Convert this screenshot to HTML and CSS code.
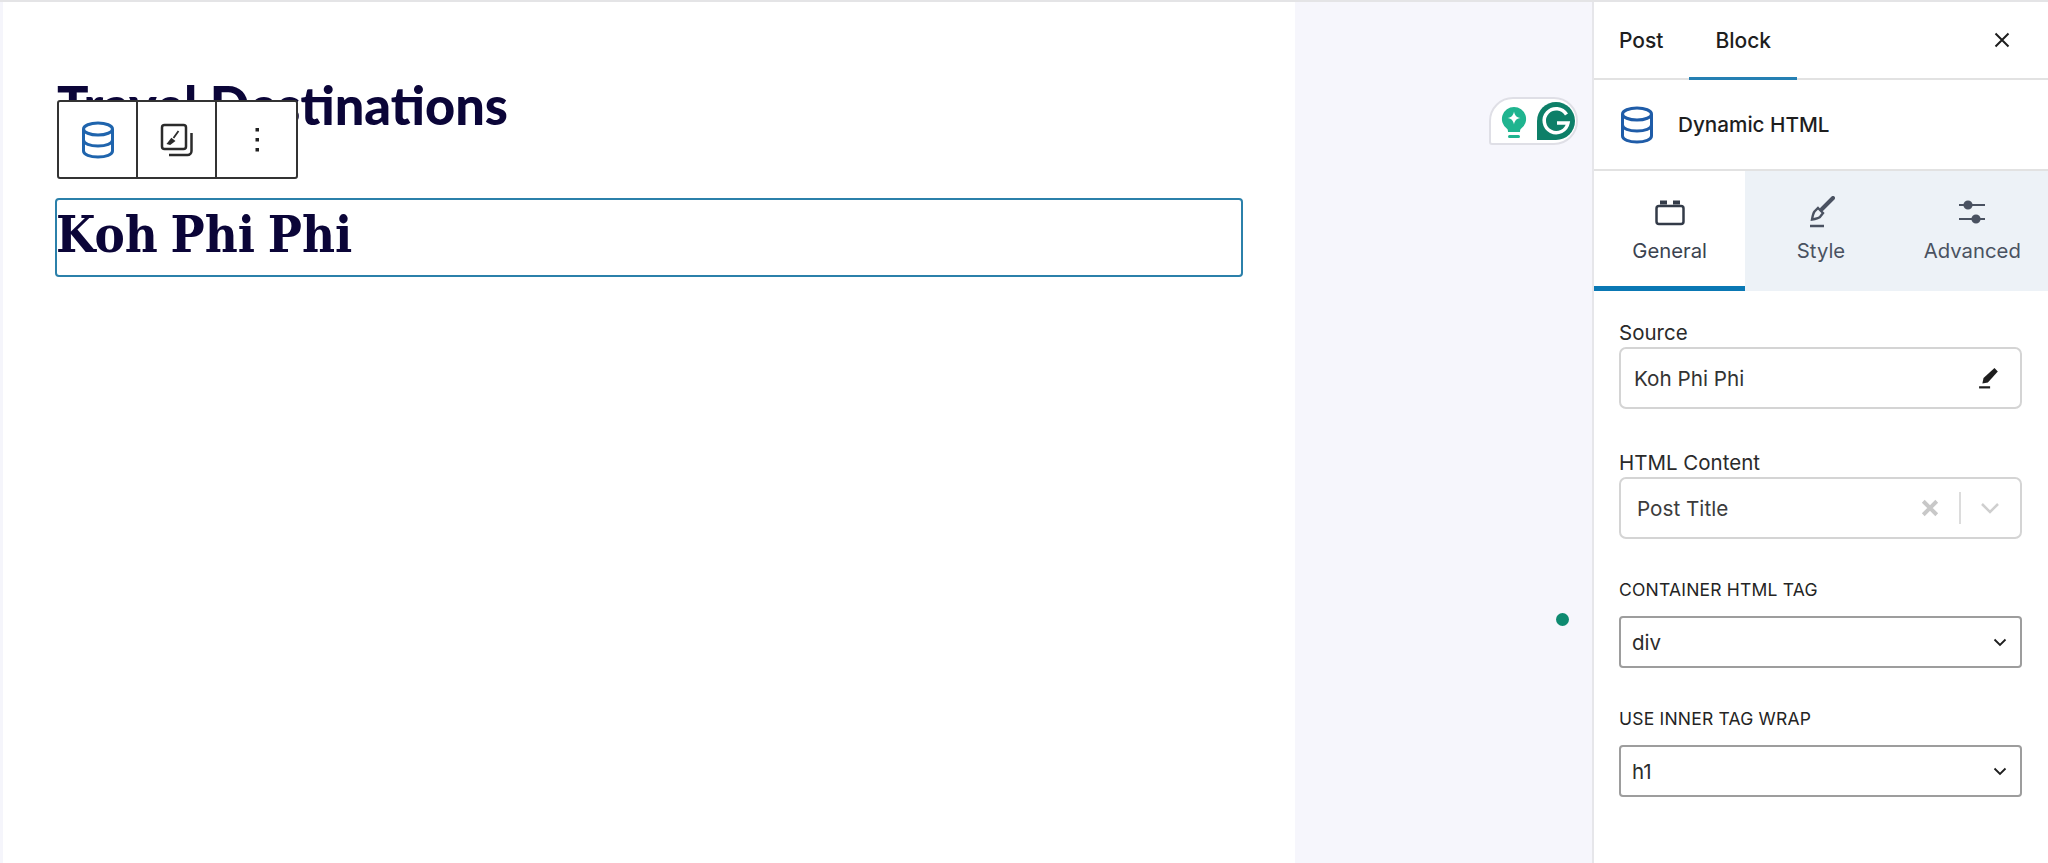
FILE: index.html
```html
<!DOCTYPE html>
<html lang="en">
<head>
    <meta charset="UTF-8">
    <meta name="viewport" content="width=device-width, initial-scale=1.0">
    <title>Edit Post</title>
    <link rel="stylesheet" href="styles.css">
</head>
<body>
    <div class="app">
        <main class="canvas">
            <h2 class="page-title">Travel Destinations</h2>
            <div class="block-selected">
                <h1 class="block-title">Koh Phi Phi</h1>
            </div>

            <!-- Floating block toolbar -->
            <div class="toolbar">
                <div class="toolbar-cell">
                    <svg width="34" height="38" viewBox="0 0 34 38" fill="none" stroke="#1f64ad" stroke-width="3">
                        <ellipse cx="17" cy="8" rx="14.5" ry="6"/>
                        <path d="M2.5 8v22c0 3.5 6.500 6 14.500 6s14.500-2.500 14.500-6V8"/>
                        <path d="M2.500 19c0 3.500 6.500 6 14.500 6s14.500-2.500 14.500-6"/>
                    </svg>
                </div>
                <div class="toolbar-cell">
                    <svg width="34" height="34" viewBox="0 0 34 34" fill="none" stroke="#2b2b2b" stroke-width="2.500">
                        <rect x="2" y="2" width="24" height="24" rx="2.500"/>
                        <path d="M31.500 10v18a4 4 0 0 1-4 4H9"/>
                        <path d="M8 20.500l3.500-4.500 2.500 2-4 3zM13.500 15l5-7" stroke-width="1.800" fill="#2b2b2b"/>
                    </svg>
                </div>
                <div class="toolbar-cell">
                    <svg width="6" height="26" viewBox="0 0 6 26" fill="#222">
                        <rect x="1.500" y="1" width="3.500" height="3.500"/>
                        <rect x="1.500" y="11" width="3.500" height="3.500"/>
                        <rect x="1.500" y="21" width="3.500" height="3.500"/>
                    </svg>
                </div>
            </div>
        </main>

        <div class="gutter">
            <div class="grammarly">
                <svg class="bulb-icon" width="26" height="34" viewBox="0 0 26 34">
                    <path d="M13 1a12 12 0 0 1 7 21.800c-.8.700-1 1.700-1 3.200H7c0-1.500-.2-2.500-1-3.200A12 12 0 0 1 13 1z" fill="#1fb48f"/>
                    <path d="M13 5.500c.8 4 2.300 5.700 6.500 6.500-4.200.8-5.700 2.500-6.500 6.500-.8-4-2.300-5.700-6.500-6.500 4.200-.8 5.700-2.500 6.500-6.500z" fill="#fff"/>
                    <rect x="7" y="29" width="12" height="3" rx="1.500" fill="#1fb48f"/>
                </svg>
                <div class="grammarly-g">
                    <svg width="36" height="36" viewBox="0 0 36 36" fill="none" stroke="#fff" stroke-width="3.500">
                        <path d="M28.500 11.500A12 12 0 1 0 30 20H19"/>
                    </svg>
                </div>
            </div>
            <span class="status-dot"></span>
        </div>

        <aside class="sidebar">
            <div class="sidebar-header">
                <div class="sidebar-tab">Post</div>
                <div class="sidebar-tab active">Block</div>
                <svg class="close-icon" width="16" height="16" viewBox="0 0 16 16" fill="none" stroke="#1e1e1e" stroke-width="2">
                    <path d="M1.500 1.500l13 13M14.500 1.500l-13 13"/>
                </svg>
            </div>

            <div class="block-info">
                <svg width="34" height="38" viewBox="0 0 34 38" fill="none" stroke="#1f5ca8" stroke-width="3">
                    <ellipse cx="17" cy="8" rx="14.500" ry="6"/>
                    <path d="M2.500 8v22c0 3.500 6.500 6 14.500 6s14.500-2.500 14.500-6V8"/>
                    <path d="M2.500 19c0 3.500 6.500 6 14.500 6s14.500-2.500 14.500-6"/>
                </svg>
                <span>Dynamic HTML</span>
            </div>

            <div class="panel-tabs">
                <div class="panel-tab active">
                    <svg width="30" height="26" viewBox="0 0 30 26" fill="none" stroke="#333b48" stroke-width="2.500">
                        <rect x="1.500" y="6" width="27" height="18" rx="2.500"/>
                        <path d="M5 2.500h7M18 2.500h7" stroke-width="4"/>
                    </svg>
                    <span>General</span>
                </div>
                <div class="panel-tab">
                    <svg class="pen-icon" width="28" height="32" viewBox="0 0 28 32" fill="none" stroke="#4a5261" stroke-width="2.200">
                        <path d="M26 2L15 13" stroke-width="4" stroke-linecap="round"/>
                        <path d="M11 12l5 5-3 4c-2 1.500-5 2-8 2.500.5-3 1-6 2.500-8z" stroke-width="2.400"/>
                        <path d="M3 30h14" stroke-width="2.500"/>
                    </svg>
                    <span>Style</span>
                </div>
                <div class="panel-tab">
                    <svg width="28" height="28" viewBox="0 0 28 28" fill="#4a5261" stroke="#4a5261" stroke-width="2.200">
                        <path d="M1 7h26M1 21h26"/>
                        <circle cx="10" cy="7" r="3.500"/>
                        <circle cx="18" cy="21" r="3.500"/>
                    </svg>
                    <span>Advanced</span>
                </div>
            </div>

            <div class="panel-body">
                <div class="field field-source">
                    <label>Source</label>
                    <div class="input-box">
                        <span>Koh Phi Phi</span>
                        <svg width="20" height="22" viewBox="0 0 18 20" fill="#1e1e1e">
                            <path d="M14 1l3 3-9 10-5 1 1-5z"/>
                            <rect x="0" y="17.500" width="10" height="2"/>
                        </svg>
                    </div>
                </div>

                <div class="field field-content">
                    <label>HTML Content</label>
                    <div class="input-box multi-select">
                        <span>Post Title</span>
                        <svg class="clear-icon" width="18" height="18" viewBox="0 0 16 16" fill="none" stroke="#c8c8c8" stroke-width="3.500">
                            <path d="M2 2l12 12M14 2L2 14"/>
                        </svg>
                        <i class="divider"></i>
                        <svg width="20" height="12" viewBox="0 0 20 12" fill="none" stroke="#cfcfcf" stroke-width="2.500">
                            <path d="M2 2l8 8 8-8"/>
                        </svg>
                    </div>
                </div>

                <div class="field field-tag">
                    <label class="caps">CONTAINER HTML TAG</label>
                    <div class="select-box">
                        <span>div</span>
                        <svg width="14" height="9" viewBox="0 0 14 9" fill="none" stroke="#1e1e1e" stroke-width="1.800">
                            <path d="M1.500 1.500L7 7l5.500-5.500"/>
                        </svg>
                    </div>
                </div>

                <div class="field field-tag">
                    <label class="caps">USE INNER TAG WRAP</label>
                    <div class="select-box">
                        <span>h1</span>
                        <svg width="14" height="9" viewBox="0 0 14 9" fill="none" stroke="#1e1e1e" stroke-width="1.800">
                            <path d="M1.500 1.500L7 7l5.500-5.500"/>
                        </svg>
                    </div>
                </div>
            </div>
        </aside>
    </div>
</body>
</html>
```

FILE: styles.css
```css
* {
    margin: 0;
    padding: 0;
    box-sizing: border-box;
}

body {
    font-family: 'Inter', sans-serif;
    background: #f6f6fc;
    overflow: hidden;
}

.app {
    display: flex;
    width: 2048px;
    height: 863px;
    border-top: 2px solid #e4e4e6;
}

/* Editor canvas */
.canvas {
    position: relative;
    width: 1295px;
    padding: 73px 52px 0 54px;
    background: #fff;
    border-left: 3px solid #f5f5fb;
}

.page-title {
    font-family: 'Lato', sans-serif;
    font-weight: 900;
    font-size: 52.300px;
    line-height: 60px;
    color: #0b0538;
}

.block-selected {
    height: 79px;
    margin-top: 63px;
    margin-left: -2px;
    border: 2px solid #2b80aa;
    border-radius: 4px;
}

.block-title {
    margin-left: -1px;
    font-family: 'DejaVu Serif Condensed', 'DejaVu Serif', serif;
    font-weight: 700;
    font-size: 50.500px;
    word-spacing: -3px;
    line-height: 69px;
    color: #0b0538;
}

.toolbar {
    position: absolute;
    top: 98px;
    left: 54px;
    display: flex;
    height: 79px;
    background: #fff;
    border: 2px solid #333;
    border-radius: 3px;
}

.toolbar-cell {
    display: flex;
    align-items: center;
    justify-content: center;
    width: 79px;
    border-right: 2px solid #333;
}

.toolbar-cell:last-child {
    border-right: none;
}

/* Area between canvas and sidebar */
.gutter {
    position: relative;
    width: 297px;
}

.grammarly {
    position: absolute;
    top: 95px;
    left: 194px;
    display: flex;
    align-items: center;
    gap: 10px;
    width: 89px;
    height: 48px;
    padding-left: 10px;
    background: #fff;
    border: 2px solid #dfdfe6;
    border-radius: 24px 24px 24px 3px;
}

.bulb-icon {
    margin-top: 4px;
}

.grammarly-g {
    display: flex;
    align-items: center;
    justify-content: center;
    width: 38px;
    height: 38px;
    background: #0d7f68;
    border-radius: 19px 19px 19px 0;
}

.status-dot {
    position: absolute;
    top: 611px;
    left: 261px;
    width: 13px;
    height: 13px;
    border-radius: 50%;
    background: #0e8a70;
}

/* Sidebar */
.sidebar {
    width: 456px;
    background: #fff;
    border-left: 2px solid #e6e6ea;
}

.sidebar-header {
    display: flex;
    align-items: stretch;
    height: 78px;
    border-bottom: 2px solid #e2e2e2;
}

.sidebar-tab {
    display: flex;
    align-items: center;
    padding: 2px 26px 0 25px;
    margin-bottom: -2px;
    font-size: 21px;
    font-weight: 500;
    color: #1e1e1e;
    border-bottom: 3px solid transparent;
}

.sidebar-tab.active {
    padding: 2px 26px 0;
    border-bottom-color: #2580b3;
}

.close-icon {
    align-self: center;
    margin-left: auto;
    margin-right: 38px;
}

.block-info {
    display: flex;
    align-items: center;
    gap: 24px;
    height: 91px;
    padding-left: 26px;
    font-size: 20.700px;
    font-weight: 450;
    color: #1e1e1e;
    border-bottom: 2px solid #e2e2e2;
}

.panel-tabs {
    display: flex;
    height: 120px;
    background: #edf2f7;
}

.panel-tab {
    display: flex;
    flex: 1;
    flex-direction: column;
    align-items: center;
    justify-content: flex-end;
    gap: 12px;
    padding-bottom: 28px;
    font-size: 20.300px;
    color: #4a5261;
}

.panel-tab.active {
    background: #fff;
    color: #3b4350;
    border-bottom: 5px solid #0a78b4;
    padding-bottom: 23px;
}

.pen-icon {
    margin-bottom: -2px;
}

.panel-body {
    padding: 29px 26px 0 25px;
}

.field label {
    display: block;
    font-size: 20.500px;
    line-height: 26px;
    color: #2a2a2a;
}

.field label.caps {
    font-size: 17.500px;
    line-height: 22px;
    margin-bottom: 15px;
    letter-spacing: 0.2px;
    color: #242424;
}

.field-source {
    margin-bottom: 41px;
}

.field-content {
    margin-bottom: 40px;
}

.field-tag {
    margin-bottom: 40px;
}

.input-box {
    display: flex;
    align-items: center;
    justify-content: space-between;
    height: 62px;
    margin-top: 1px;
    padding: 0 21px 0 13px;
    font-size: 20.700px;
    color: #333;
    border: 2px solid #d4d4d4;
    border-radius: 7px;
}

.multi-select {
    justify-content: flex-start;
    padding: 0 20px 0 16px;
    color: #3c3c3c;
}

.clear-icon {
    margin-left: auto;
}

.divider {
    width: 2px;
    height: 32px;
    margin: 0 19px 0 20px;
    background: #dcdcdc;
}

.select-box {
    display: flex;
    align-items: center;
    justify-content: space-between;
    height: 52px;
    padding: 0 13px 0 11px;
    font-size: 20.500px;
    color: #2c2c2c;
    border: 2px solid #9d9d9d;
    border-radius: 4px;
}
```
